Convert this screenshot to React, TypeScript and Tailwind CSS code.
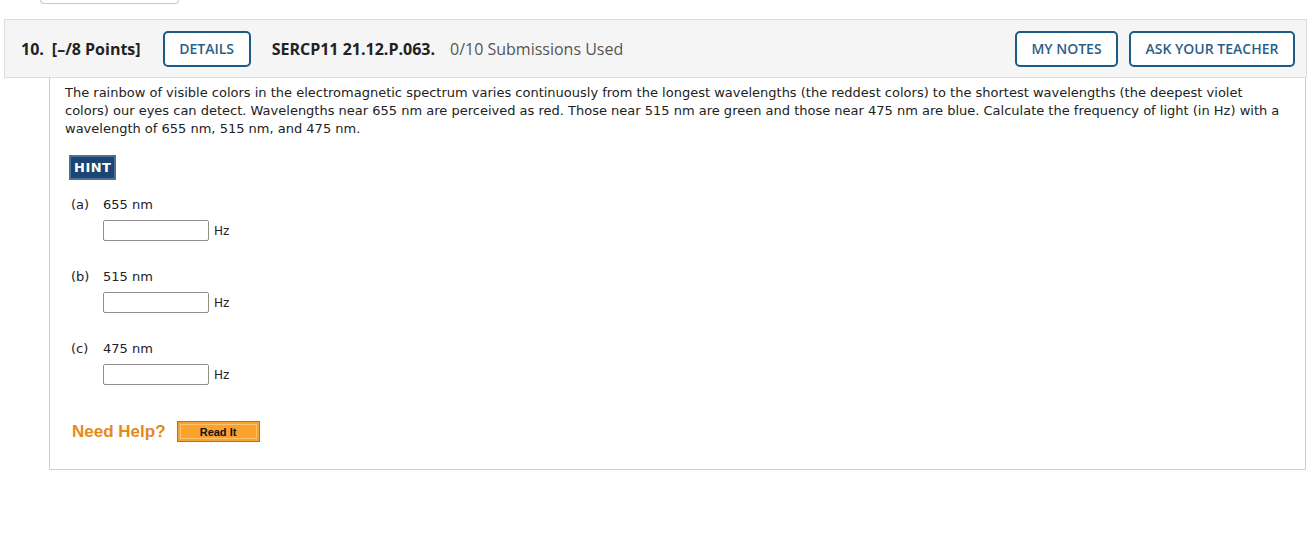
import React from "react";

const parts = [
  { label: "(a)", value: "655 nm" },
  { label: "(b)", value: "515 nm" },
  { label: "(c)", value: "475 nm" },
];

function OutlineButton({ children, className = "" }: { children: React.ReactNode; className?: string }) {
  return (
    <button
      className={`h-[36px] rounded-[5px] border-2 border-[#1d5b87] bg-white text-[14px] font-semibold text-[#2b5f88] ${className}`}
    >
      {children}
    </button>
  );
}

export default function App() {
  return (
    <div className="relative h-[536px] w-[1315px] overflow-hidden bg-white">
      {/* stub of the previous question's control */}
      <div className="ml-[40px] h-[4px] w-[139px] rounded-b-[4px] border border-t-0 border-[#c8c8c8]" />

      {/* question header */}
      <div
        className="ml-[4px] mr-[8px] mt-[15px] flex h-[59px] items-center border border-[#dcdcdc] bg-[#f5f5f5] pl-[16px] pr-[11px]"
        style={{ fontFamily: '"Open Sans", sans-serif' }}
      >
        <span className="text-[16px] font-bold text-[#222]">10.</span>
        <span className="ml-[8px] text-[16px] font-bold text-[#222]">[–/8 Points]</span>
        <OutlineButton className="ml-[22px] w-[88px]">DETAILS</OutlineButton>
        <span className="ml-[21px] text-[16px] font-bold text-[#222]">SERCP11 21.12.P.063.</span>
        <span className="ml-[15px] text-[16px] text-[#555]">0/10 Submissions Used</span>
        <div className="ml-auto flex gap-[11px]">
          <OutlineButton className="w-[103px]">MY NOTES</OutlineButton>
          <OutlineButton className="w-[166px]">ASK YOUR TEACHER</OutlineButton>
        </div>
      </div>

      {/* question body */}
      <div
        className="ml-[49px] mr-[9px] h-[392px] border border-t-0 border-[#cfcfcf] pl-[15px] pr-[17px] pt-[6px] text-[13px] leading-[18px] text-[#222]"
        style={{ fontFamily: '"DejaVu Sans", Verdana, sans-serif' }}
      >
        <p>
          The rainbow of visible colors in the electromagnetic spectrum varies continuously from the longest
          wavelengths (the reddest colors) to the shortest wavelengths (the deepest violet colors) our eyes can
          detect. Wavelengths near 655 nm are perceived as red. Those near 515 nm are green and those near 475 nm
          are blue. Calculate the frequency of light (in Hz) with a wavelength of 655 nm, 515 nm, and 475 nm.
        </p>

        <div className="ml-[4px] mt-[17px] inline-flex h-[25px] items-center border-2 border-[#4a7299] bg-[#1c4672] px-[3px] text-[13px] font-bold tracking-[0.5px] text-white">
          HINT
        </div>

        <div className="ml-[6px] mt-[16px] flex flex-col gap-[27px]">
          {parts.map((p) => (
            <div key={p.label}>
              <div className="flex">
                <span className="w-[32px]">{p.label}</span>
                <span>{p.value}</span>
              </div>
              <div className="ml-[32px] mt-[6px] flex items-center">
                <input
                  type="text"
                  className="h-[21px] w-[106px] rounded-[2px] border border-[#8f8f8f] bg-white"
                />
                <span className="ml-[5px] text-[12px]">Hz</span>
              </div>
            </div>
          ))}
        </div>

        <div className="ml-[7px] mt-[36px] flex items-center" style={{ fontFamily: '"Liberation Sans", Arial, sans-serif' }}>
          <span className="text-[17px] font-bold text-[#e58a1a]">Need Help?</span>
          <button className="ml-[11px] flex h-[21px] w-[83px] items-center justify-center border border-[#c06d10] bg-[#f9a32e] p-[2px]">
            <span className="flex h-full w-full items-center justify-center border border-[#fbc26f] text-[11px] font-bold text-[#111]">
              Read It
            </span>
          </button>
        </div>
      </div>
    </div>
  );
}
